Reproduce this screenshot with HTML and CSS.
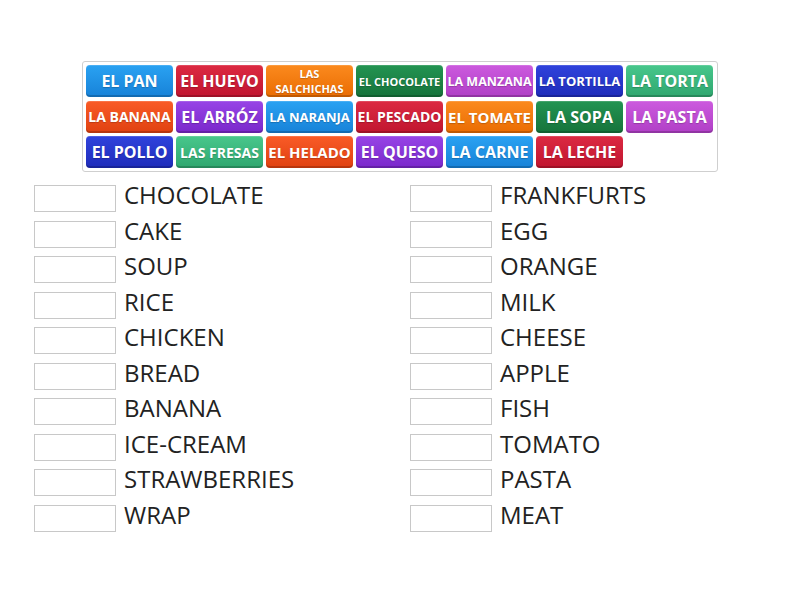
FILE: index.html
```html
<!DOCTYPE html>
<html>
<head>
<meta charset="utf-8">
<link rel="stylesheet" href="styles.css">
</head>
<body>
<div class="tiles">
  <div class="tile c-blue s16">EL PAN</div>
  <div class="tile c-red s16">EL HUEVO</div>
  <div class="tile c-orange s11 two">LAS<br>SALCHICHAS</div>
  <div class="tile c-dgreen s11">EL CHOCOLATE</div>
  <div class="tile c-magenta s12">LA MANZANA</div>
  <div class="tile c-dblue s13">LA TORTILLA</div>
  <div class="tile c-mint s16">LA TORTA</div>
  <div class="tile c-ored s14">LA BANANA</div>
  <div class="tile c-violet s16">EL ARRÓZ</div>
  <div class="tile c-blue s13">LA NARANJA</div>
  <div class="tile c-red s14">EL PESCADO</div>
  <div class="tile c-orange s15">EL TOMATE</div>
  <div class="tile c-dgreen s16">LA SOPA</div>
  <div class="tile c-magenta s16">LA PASTA</div>
  <div class="tile c-dblue s16">EL POLLO</div>
  <div class="tile c-mint s14">LAS FRESAS</div>
  <div class="tile c-ored s15">EL HELADO</div>
  <div class="tile c-violet s16">EL QUESO</div>
  <div class="tile c-blue s16">LA CARNE</div>
  <div class="tile c-red s16">LA LECHE</div>
</div>
<div class="lists">
  <div class="col">
    <div class="row"><div class="slot"></div><span class="label">CHOCOLATE</span></div>
    <div class="row"><div class="slot"></div><span class="label">CAKE</span></div>
    <div class="row"><div class="slot"></div><span class="label">SOUP</span></div>
    <div class="row"><div class="slot"></div><span class="label">RICE</span></div>
    <div class="row"><div class="slot"></div><span class="label">CHICKEN</span></div>
    <div class="row"><div class="slot"></div><span class="label">BREAD</span></div>
    <div class="row"><div class="slot"></div><span class="label">BANANA</span></div>
    <div class="row"><div class="slot"></div><span class="label">ICE-CREAM</span></div>
    <div class="row"><div class="slot"></div><span class="label">STRAWBERRIES</span></div>
    <div class="row"><div class="slot"></div><span class="label">WRAP</span></div>
  </div>
  <div class="col">
    <div class="row"><div class="slot"></div><span class="label">FRANKFURTS</span></div>
    <div class="row"><div class="slot"></div><span class="label">EGG</span></div>
    <div class="row"><div class="slot"></div><span class="label">ORANGE</span></div>
    <div class="row"><div class="slot"></div><span class="label">MILK</span></div>
    <div class="row"><div class="slot"></div><span class="label">CHEESE</span></div>
    <div class="row"><div class="slot"></div><span class="label">APPLE</span></div>
    <div class="row"><div class="slot"></div><span class="label">FISH</span></div>
    <div class="row"><div class="slot"></div><span class="label">TOMATO</span></div>
    <div class="row"><div class="slot"></div><span class="label">PASTA</span></div>
    <div class="row"><div class="slot"></div><span class="label">MEAT</span></div>
  </div>
</div>
</body>
</html>
```
FILE: styles.css
```css
html, body {
  margin: 0;
  padding: 0;
  background: #fff;
  font-family: "Open Sans", "Liberation Sans", sans-serif;
}

.tiles {
  box-sizing: border-box;
  width: 636px;
  margin: 61px 0 0 82px;
  padding: 3px 4px 3px 3px;
  border: 1px solid #cfcfcf;
  border-radius: 3px;
  display: flex;
  flex-wrap: wrap;
  column-gap: 3px;
  row-gap: 3.5px;
}

.tile {
  box-sizing: border-box;
  width: 87px;
  height: 32px;
  border-radius: 4px;
  display: flex;
  align-items: center;
  justify-content: center;
  text-align: center;
  color: #fff;
  font-weight: 700;
  white-space: nowrap;
  text-shadow: 0 1px 1px rgba(0, 0, 0, 0.2);
  box-shadow: inset 0 -2px 0 rgba(0, 0, 0, 0.18), inset 0 1px 0 rgba(255, 255, 255, 0.15);
}

.s16 { font-size: 16px; }
.s15 { font-size: 15px; }
.s14 { font-size: 14px; }
.s13 { font-size: 13px; }
.s12 { font-size: 12.5px; }
.s11 { font-size: 11px; }
.two { line-height: 15px; padding-bottom: 1px; }

.c-blue    { background: linear-gradient(#2aa2f2, #1782d8); }
.c-red     { background: linear-gradient(#dc2a42, #c0152f); }
.c-orange  { background: linear-gradient(#fb8a1e, #ea6c02); }
.c-dgreen  { background: linear-gradient(#239452, #16733b); }
.c-magenta { background: linear-gradient(#cc5ade, #b03fc6); }
.c-dblue   { background: linear-gradient(#3043dc, #1e2cba); }
.c-mint    { background: linear-gradient(#48c78c, #2fa76f); }
.c-ored    { background: linear-gradient(#f95b27, #e04110); }
.c-violet  { background: linear-gradient(#9744e6, #7a28cb); }

.lists {
  display: grid;
  grid-template-columns: 376px auto;
  padding-left: 34px;
  margin-top: 13px;
}

.col {
  display: flex;
  flex-direction: column;
  row-gap: 8.5px;
}

.row {
  display: flex;
  align-items: center;
  height: 27px;
  column-gap: 8px;
}

.slot {
  box-sizing: border-box;
  width: 82px;
  height: 27px;
  border: 1px solid #c8c8c8;
  background: #fff;
  flex: none;
}

.label {
  font-size: 24px;
  color: #222;
  white-space: nowrap;
  padding-bottom: 8px;
}
```
